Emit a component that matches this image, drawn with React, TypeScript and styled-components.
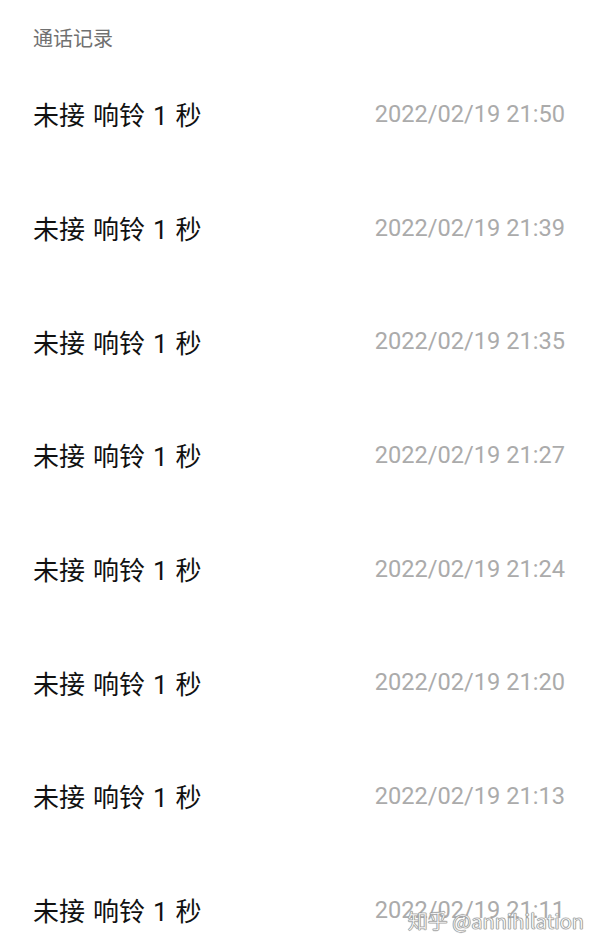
import React from "react";
import styled, { createGlobalStyle } from "styled-components";

const Global = createGlobalStyle`
  html, body { margin: 0; padding: 0; background: #fff; }
  body { font-family: Roboto, "Noto Sans CJK SC", sans-serif; }
`;

const Page = styled.div`
  position: relative;
  width: 600px;
  height: 948px;
  overflow: hidden;
  background: #fff;
`;

const Header = styled.div`
  height: 57px;
  box-sizing: border-box;
  padding: 0 33px;
  display: flex;
  align-items: center;
  padding-top: 17px;
  font-family: Roboto, "Noto Sans CJK SC", sans-serif;
  font-size: 20px;
  color: #707070;
`;

const List = styled.div`
  display: flex;
  flex-direction: column;
`;

const Row = styled.div`
  height: 113.7px;
  flex: none;
  display: flex;
  align-items: center;
  justify-content: space-between;
  padding: 0 35px 0 33px;
`;

const Title = styled.span`
  font-family: Roboto, "Noto Sans CJK SC", sans-serif;
  font-size: 26px;
  color: #111;
  white-space: pre;
  word-spacing: 1.5px;
`;

const Time = styled.span`
  font-family: Roboto, sans-serif;
  font-size: 23.6px;
  color: #ababab;
`;

const Watermark = styled.div`
  position: absolute;
  right: 16px;
  bottom: 13px;
  font-family: "Noto Sans CJK SC", Roboto, sans-serif;
  font-size: 20px;
  color: #fff;
  text-shadow: 0 0 1px #888, 0 0 1px #888, 0 0 1px #888;
  -webkit-text-stroke: 0.4px #9a9a9a;
`;

const times = ["21:50", "21:39", "21:35", "21:27", "21:24", "21:20", "21:13", "21:11"];

export default function App() {
  return (
    <Page>
      <Global />
      <Header>通话记录</Header>
      <List>
        {times.map((t) => (
          <Row key={t}>
            <Title>未接 响铃 1 秒</Title>
            <Time>2022/02/19 {t}</Time>
          </Row>
        ))}
      </List>
      <Watermark>知乎 @annihilation</Watermark>
    </Page>
  );
}
